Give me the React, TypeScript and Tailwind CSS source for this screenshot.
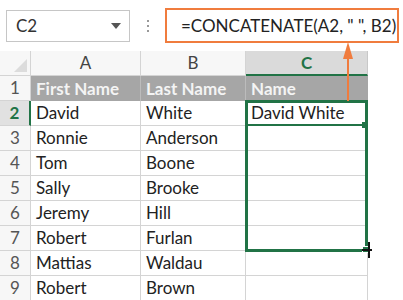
import React from 'react'

const rows: [string, string, string][] = [
    ['David', 'White', 'David White'],
    ['Ronnie', 'Anderson', ''],
    ['Tom', 'Boone', ''],
    ['Sally', 'Brooke', ''],
    ['Jeremy', 'Hill', ''],
    ['Robert', 'Furlan', ''],
    ['Mattias', 'Waldau', ''],
    ['Robert', 'Brown', ''],
];

const cell = 'h-[25px] border-r border-b border-[#d4d4d4] px-[5px] flex items-center text-[17px] text-[#222] whitespace-nowrap overflow-hidden';
const rowNum = 'h-[25px] border-r border-b border-[#d4d4d4] bg-[#f7f7f7] flex items-center justify-center text-[17px] text-[#555]';

const App: React.FC = () => {
    return (
        <div className="relative w-[403px] h-[300px] overflow-hidden bg-white" style={{ fontFamily: 'Lato, "Open Sans", sans-serif' }}>
            {/* Name box + formula bar */}
            <div className="flex items-center h-[51px] pl-[6px] pr-[4px]">
                <div className="w-[124px] h-[32px] border border-[#c6c6c6] flex items-center justify-between pl-[9px] pr-[8px]">
                    <span className="text-[17px] text-[#333]">C2</span>
                    <svg width="10" height="6" viewBox="0 0 10 6"><path d="M0 0 L10 0 L5 6 Z" fill="#555" /></svg>
                </div>
                <div className="w-[35px] flex flex-col items-center gap-[3px]">
                    <span className="w-[2px] h-[2px] bg-[#999]" />
                    <span className="w-[2px] h-[2px] bg-[#999]" />
                    <span className="w-[2px] h-[2px] bg-[#999]" />
                </div>
                <div className="flex-1 h-[35px] border-2 border-[#f07c3e] flex items-center pl-[14px]">
                    <span className="text-[17px] text-[#222]">=CONCATENATE(A2, " ", B2)</span>
                </div>
            </div>

            {/* Sheet grid */}
            <div className="grid grid-cols-[31px_110px_105px_122px_1fr]">
                {/* column headers */}
                <div className="relative h-[25px] border-r border-b border-[#d4d4d4] bg-[#f7f7f7]">
                    <svg className="absolute right-[3px] bottom-[3px]" width="13" height="13" viewBox="0 0 13 13"><path d="M13 0 L13 13 L0 13 Z" fill="#dcdcdc" /></svg>
                </div>
                <div className="h-[25px] border-r border-b border-[#d4d4d4] bg-[#f7f7f7] flex items-center justify-center text-[17px] text-[#444]">A</div>
                <div className="h-[25px] border-r border-b border-[#d4d4d4] bg-[#f7f7f7] flex items-center justify-center text-[17px] text-[#444]">B</div>
                <div className="h-[25px] border-r border-[#c8c8c8] border-b-2 border-b-[#217346] bg-[#dadada] flex items-center justify-center text-[17px] font-bold text-[#217346]">C</div>
                <div />

                {/* row 1 */}
                <div className={rowNum}>1</div>
                <div className="h-[25px] bg-[#a6a6a6] border-r border-[#bcbcbc] px-[5px] flex items-center text-[17px] font-bold text-[#f4f4f4]">First Name</div>
                <div className="h-[25px] bg-[#a6a6a6] border-r border-[#bcbcbc] px-[5px] flex items-center text-[17px] font-bold text-[#f4f4f4]">Last Name</div>
                <div className="h-[25px] bg-[#a6a6a6] px-[5px] flex items-center text-[17px] font-bold text-[#f4f4f4]">Name</div>
                <div />

                {rows.map((r, i) => {
                    const n = i + 2;
                    return (
                        <React.Fragment key={n}>
                            {n === 2 ? (
                                <div className="h-[25px] border-b border-[#d4d4d4] border-r-2 border-r-[#217346] bg-[#e1e1e1] flex items-center justify-center text-[17px] font-bold text-[#217346]">2</div>
                            ) : (
                                <div className={rowNum}>{n}</div>
                            )}
                            <div className={cell}>{r[0]}</div>
                            <div className={cell}>{r[1]}</div>
                            <div className={cell}>{r[2]}</div>
                            <div />
                        </React.Fragment>
                    );
                })}
            </div>

            {/* selection C2:C7 */}
            <div className="absolute left-[245px] top-[100px] w-[123px] h-[152px] border-[3px] border-[#217346]" />
            {/* active cell underline */}
            <div className="absolute left-[246px] top-[124px] w-[120px] h-[2px] bg-[#217346]" />
            <div className="absolute left-[362px] top-[122px] w-[6px] h-[6px] bg-[#217346]" />
            {/* fill handle + cursor */}
            <div className="absolute left-[362px] top-[246px] w-[7px] h-[7px] bg-[#217346] border border-white" />
            <svg className="absolute left-[360px] top-[240px]" width="14" height="20" viewBox="0 0 14 20">
                <path d="M2 10 H12" stroke="#111" strokeWidth="2" />
                <path d="M9 2 V18" stroke="#111" strokeWidth="2" />
            </svg>

            {/* orange arrow */}
            <svg className="absolute left-[341px] top-[42px]" width="14" height="60" viewBox="0 0 14 60">
                <path d="M7 10 V59" stroke="#f07c3e" strokeWidth="2" />
                <path d="M7 0 L12 17 L2 17 Z" fill="#f07c3e" />
            </svg>
        </div>
    );
};

export default App;
